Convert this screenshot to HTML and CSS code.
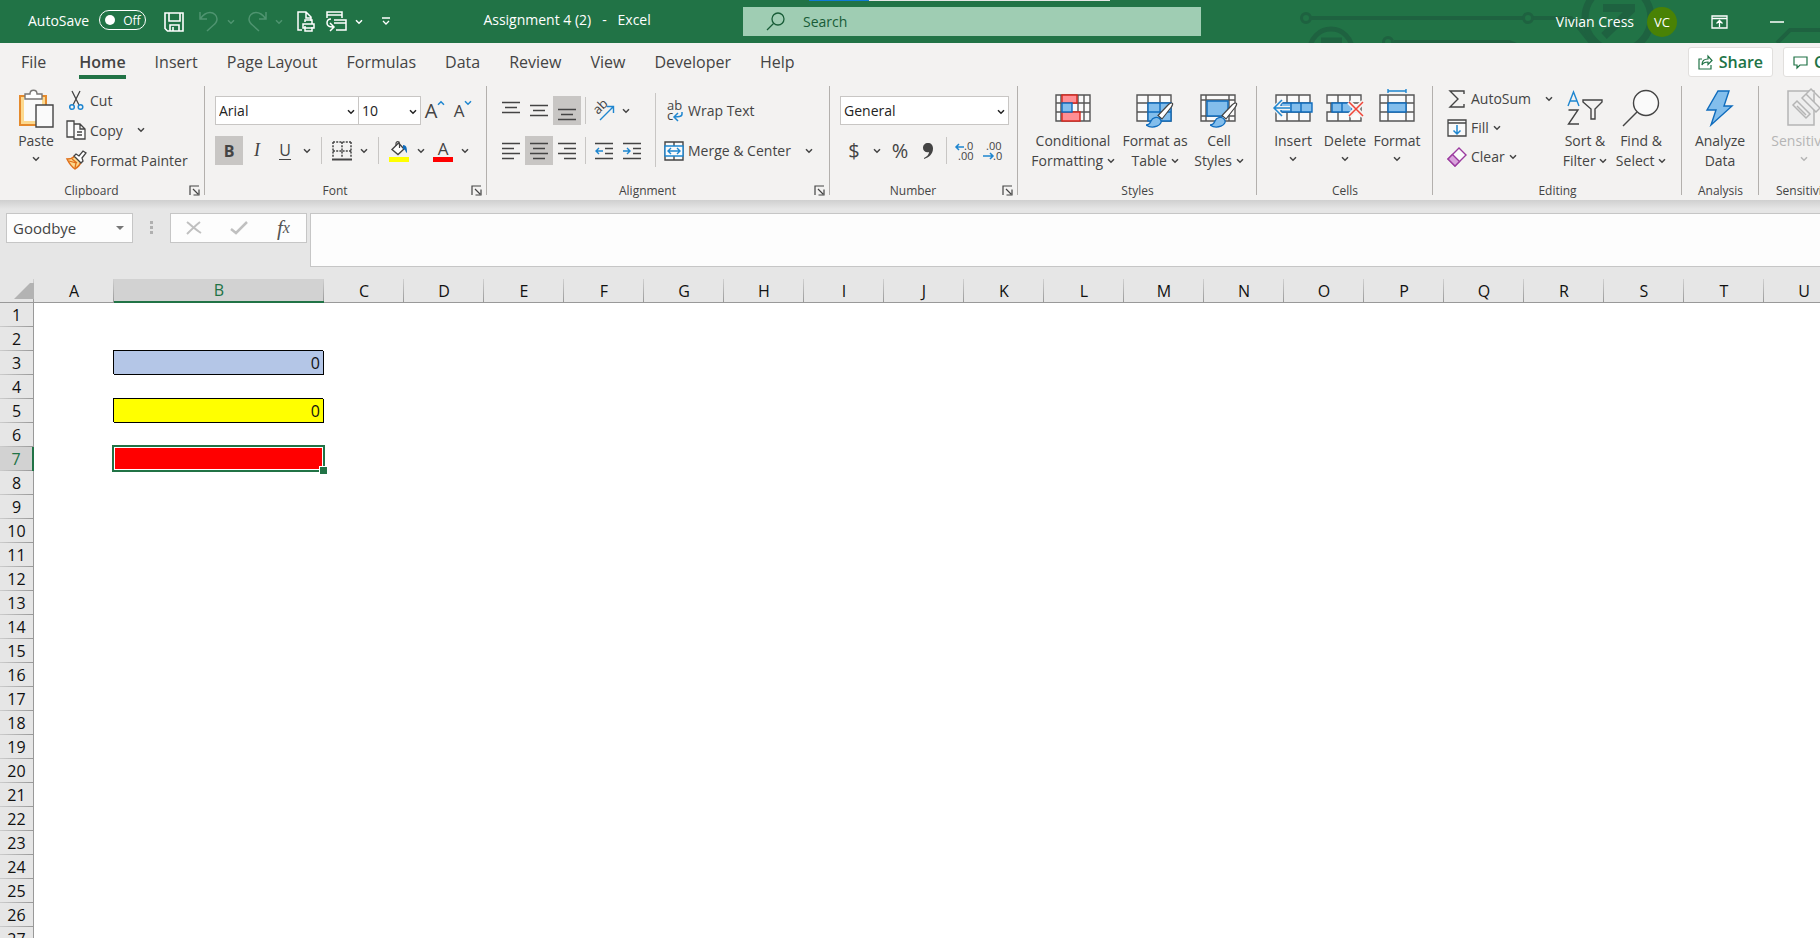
FILE: index.html
```html
<!DOCTYPE html>
<html lang="en">
<head>
    <meta charset="utf-8">
    <title>Assignment 4 (2) - Excel</title>
    <link rel="stylesheet" href="styles.css">
</head>
<body>
    <!-- shared icons -->
    <svg class="defs" width="0" height="0">
        <symbol id="chev" viewBox="0 0 8 6"><path d="M1 1.2 4 4.2 7 1.2" fill="none" stroke="currentColor" stroke-width="1.5"/></symbol>
        <symbol id="launch" viewBox="0 0 11 11"><path d="M1 10V1h9M4 4l5 5M10 4.500V10H4.500" fill="none" stroke="currentColor" stroke-width="1.2"/></symbol>
        <symbol id="brush" viewBox="0 0 28 26">
            <path d="M25.500 1c2 0 1 2.500-.5 4.500L16 17l-4-3.500L22 3c1.300-1.300 2.500-2 3.500-2z" fill="#fff" stroke="#444" stroke-width="1.200"/>
            <path d="M0 23c3 0 4-1.500 5-4 1.500-3.500 6-5 9-2 2.500 2.500.5 6-3 7.200-3.500 1.200-8 1-11-1.200z" fill="#83beec" stroke="#0f6cbd" stroke-width="1.300"/>
        </symbol>
    </svg>

    <header class="titlebar">
        <svg class="art" width="520" height="43" viewBox="0 0 520 43" fill="none" stroke="#1e6240" stroke-width="4">
            <circle cx="6" cy="18" r="4.500" stroke-width="3"/>
            <path d="M11 18h212M233 18h38l20 25M94 42h115l10 4M477 43l13-13h30"/>
            <circle cx="228" cy="18" r="4.500" stroke-width="3"/>
            <circle cx="31" cy="50" r="21" stroke-width="5"/>
            <path d="M21 41h21" stroke-width="7"/>
            <circle cx="88" cy="42" r="4.500" stroke-width="3"/>
            <circle cx="318" cy="18" r="33" stroke-width="7"/>
            <path d="M303 8h32M304 36l28-27" stroke-width="8"/>
        </svg>
        <div class="strip"></div>
        <div class="title-left">
            <div class="quick">
                <label class="autosave"><span>AutoSave</span>
                    <input type="checkbox"><span class="switch">Off</span>
                </label>
                <button class="q-save" aria-label="Save"><svg width="20" height="20" fill="none" stroke="#fff" stroke-width="1.600"><path d="M1 1h18v18H3.500L1 16.500zM5 1v8h11V1M6 19v-6h9v6M9 19v-4"/></svg></button>
                <button class="q-undo" aria-label="Undo"><svg width="20" height="21" fill="none" stroke="#4f9470" stroke-width="1.500"><path d="M1 1v7h7M1.500 7.500C4 4 7 1.500 11 1.500c4 0 7 3 7 6.500 0 3-2 5-4 6.500L8 20"/></svg></button>
                <svg class="chev faded"><use href="#chev"/></svg>
                <button class="q-redo" aria-label="Redo"><svg width="20" height="21" fill="none" stroke="#4f9470" stroke-width="1.500"><path d="M19 1v7h-7M18.500 7.500C16 4 13 1.500 9 1.500c-4 0-7 3-7 6.500 0 3 2 5 4 6.500L12 20"/></svg></button>
                <svg class="chev faded"><use href="#chev"/></svg>
                <button class="q-print" aria-label="Print preview"><svg width="20" height="21" fill="none" stroke="#fff" stroke-width="1.500"><path d="M6 19H2V1h8l5 5v4M10 1v6h5M9 11V9h7v4M7 17v-4h11v4zM9 15v5h7v-4"/></svg></button>
                <button class="q-switch" aria-label="Switch windows"><svg width="21" height="21" fill="none" stroke="#fff" stroke-width="1.500"><path d="M1 7V1h15v6M1 4h15M8 9h12v10H10M8 12h12M5 8c-3 0-4 2-4 4s1 4 6 4M4 12l4 4-4 4"/></svg></button>
                <svg class="chev"><use href="#chev"/></svg>
                <button class="q-more" aria-label="Customize toolbar"><svg width="10" height="9" fill="none" stroke="#fff" stroke-width="1.300"><path d="M1 1h8M2 4l3 3 3-3"/></svg></button>
            </div>
            <h1>Assignment 4 (2)&nbsp;&nbsp; -&nbsp;&nbsp; Excel</h1>
        </div>
        <label class="search">
            <svg width="19" height="19" fill="none" stroke="#185c37" stroke-width="1.300"><circle cx="12" cy="7" r="6"/><path d="M7.500 11.500 1 18"/></svg>
            <input type="text" placeholder="Search" aria-label="Search">
        </label>
        <div class="title-right">
            <span class="user">Vivian Cress</span>
            <span class="avatar">VC</span>
            <button class="display-opt" aria-label="Ribbon display options"><svg width="17" height="14" fill="none" stroke="#fff" stroke-width="1.300"><path d="M1 1h15v12H1zM1 3.500h15M8.500 12V6M5.500 8.500l3-3 3 3"/></svg></button>
            <button class="minimize" aria-label="Minimize"><svg width="14" height="2"><path d="M0 1h14" stroke="#fff" stroke-width="1.500"/></svg></button>
        </div>
    </header>

    <nav class="tabs">
        <a href="#" class="file">File</a>
        <a href="#" class="active">Home</a>
        <a href="#">Insert</a>
        <a href="#">Page Layout</a>
        <a href="#">Formulas</a>
        <a href="#">Data</a>
        <a href="#">Review</a>
        <a href="#">View</a>
        <a href="#">Developer</a>
        <a href="#">Help</a>
        <div class="tab-actions">
            <button><svg width="15" height="15" fill="none" stroke="#217346" stroke-width="1.200"><path d="M4 4H1v10h12v-4M4 10c0-4 2-6 6-6V1l4 4.500-4 4V7C7 7 5 8 4 10z"/></svg>Share</button>
            <button><svg width="15" height="15" fill="none" stroke="#217346" stroke-width="1.200"><path d="M1 2h13v8H7l-3 3v-3H1z"/></svg>Comments</button>
        </div>
    </nav>

    <section class="ribbon">
        <div class="group clipboard">
            <div class="body">
                <button class="big paste">
                    <svg width="36" height="40" viewBox="0 0 36 40"><path d="M2 8h26v29H2z" fill="#fcd98f" stroke="#e58a2c" stroke-width="2"/><path d="M6 10h18v23H6z" fill="#fafafa"/><path d="M7 11V6h5c0-5 7-5 7 0h5v5z" fill="#fff" stroke="#797775" stroke-width="1.400"/><path d="M18 17h17v22H18z" fill="#fafafa" stroke="#444" stroke-width="1.400"/></svg>
                    <span>Paste</span><svg class="chev"><use href="#chev"/></svg>
                </button>
                <div class="stack">
                    <button class="cmd"><svg width="20" height="20" fill="none" stroke="#444" stroke-width="1.300"><path d="M6 1l7 14M14 1L7 15"/><g stroke="#1e86d0" stroke-width="1.500"><circle cx="6" cy="17" r="2.300"/><circle cx="14.500" cy="17" r="2.300"/></g></svg>Cut</button>
                    <button class="cmd"><svg width="20" height="20" fill="#fafafa" stroke="#444" stroke-width="1.300"><path d="M1 1h7v16H1zM8 4h6l5 5v10H8zM14 4v5h5M11 12h5M11 15h5"/></svg>Copy<svg class="chev gap"><use href="#chev"/></svg></button>
                    <button class="cmd"><svg width="20" height="20" fill="none" stroke-width="1.300"><path d="M1 9c3 0 6-1 8-3l6 6c-1 3-3 5-6 7-3-2-6-6-8-10z" fill="#fcd98f" stroke="#e0701a" stroke-width="1.500"/><path d="M3 11l7 2-1 5M6 9l5 4" stroke="#e0701a"/><path d="M8 6l2-2 3 2 4-5 3 2-4 5 1 3-2 2z" fill="#fff" stroke="#444"/></svg>Format Painter</button>
                </div>
            </div>
            <footer><span>Clipboard</span><button aria-label="Clipboard settings"><svg class="launch"><use href="#launch"/></svg></button></footer>
        </div>

        <div class="group font">
            <div class="body rows">
                <div class="row">
                    <span class="combo family"><select aria-label="Font"><option>Arial</option></select><svg class="chev"><use href="#chev"/></svg></span>
                    <span class="combo size"><select aria-label="Font size"><option>10</option></select><svg class="chev"><use href="#chev"/></svg></span>
                    <button class="tool" aria-label="Increase font size"><span class="grow">A</span><svg class="chev blue up"><use href="#chev"/></svg></button>
                    <button class="tool" aria-label="Decrease font size"><span class="shrink">A</span><svg class="chev blue"><use href="#chev"/></svg></button>
                </div>
                <div class="row">
                    <button class="tool on bold">B</button>
                    <button class="tool italic">I</button>
                    <button class="tool"><span class="under">U</span></button>
                    <button class="drop" aria-label="Underline options"><svg class="chev"><use href="#chev"/></svg></button>
                    <i class="sep"></i>
                    <button class="tool" aria-label="Borders"><svg width="20" height="20" fill="none" stroke="#444" stroke-width="1.500"><path d="M1 1h18M1 10h18M1 1v16M10 1v16M19 1v16" stroke-dasharray="2 1.200"/><path d="M0 18.500h20" stroke-width="2"/></svg></button>
                    <button class="drop" aria-label="Border options"><svg class="chev"><use href="#chev"/></svg></button>
                    <i class="sep"></i>
                    <button class="tool" aria-label="Fill color"><svg width="20" height="22" fill="none"><path d="M3 9.500 9.500 3l5.500 6-6 5.500z" fill="#fff" stroke="#444" stroke-width="1.400"/><path d="M7 6V3.500C7 1 10.500 1 10.500 3.500V8" stroke="#444" stroke-width="1.200"/><path d="M14 5c4 0 4 4 4 8-2-1-1-4-4-4z" fill="#0f6cbd"/><path d="M0 17h20v5H0z" fill="#ff0"/></svg></button>
                    <button class="drop" aria-label="Fill color options"><svg class="chev"><use href="#chev"/></svg></button>
                    <button class="tool" aria-label="Font color"><span class="fontcolor">A</span></button>
                    <button class="drop" aria-label="Font color options"><svg class="chev"><use href="#chev"/></svg></button>
                </div>
            </div>
            <footer><span>Font</span><button aria-label="Font settings"><svg class="launch"><use href="#launch"/></svg></button></footer>
        </div>

        <div class="group align">
            <div class="body">
                <div class="rows">
                    <div class="row">
                        <button class="tool" aria-label="Top align"><svg class="lines"><path d="M0 1.500h18M3 6.500h12M0 11.500h18"/></svg></button>
                        <button class="tool" aria-label="Middle align"><svg class="lines"><path d="M0 4.500h18M3 9.500h12M0 14.500h18"/></svg></button>
                        <button class="tool on" aria-label="Bottom align"><svg class="lines"><path d="M0 8.500h18M3 13.500h12M0 18.500h18"/></svg></button>
                        <i class="sep"></i>
                        <button class="tool" aria-label="Orientation"><svg width="22" height="20"><text x="0" y="0" transform="translate(5 14) rotate(-45)" font-size="13" fill="#444">ab</text><path d="M7 19 20 6M14 5.500h6.500V12" fill="none" stroke="#1e86d0" stroke-width="1.400"/></svg></button>
                        <button class="drop" aria-label="Orientation options"><svg class="chev"><use href="#chev"/></svg></button>
                    </div>
                    <div class="row">
                        <button class="tool" aria-label="Align left"><svg class="lines"><path d="M0 2.500h18M0 7.500h12M0 12.500h18M0 17.500h12"/></svg></button>
                        <button class="tool on" aria-label="Center"><svg class="lines"><path d="M0 2.500h18M3 7.500h12M0 12.500h18M3 17.500h12"/></svg></button>
                        <button class="tool" aria-label="Align right"><svg class="lines"><path d="M0 2.500h18M6 7.500h12M0 12.500h18M6 17.500h12"/></svg></button>
                        <i class="sep"></i>
                        <button class="tool" aria-label="Decrease indent"><svg class="lines"><path d="M0 2.500h18M10 7.500h8M10 12.500h8M0 17.500h18"/><path d="M1 10h7M4 7l-3 3 3 3" stroke="#1e86d0"/></svg></button>
                        <button class="tool" aria-label="Increase indent"><svg class="lines"><path d="M0 2.500h18M10 7.500h8M10 12.500h8M0 17.500h18"/><path d="M0 10h7M4 7l3 3-3 3" stroke="#1e86d0"/></svg></button>
                    </div>
                </div>
                <i class="sep tall"></i>
                <div class="rows">
                    <button class="cmd"><svg width="20" height="22" fill="#444" font-size="13"><text x="3" y="10">ab</text><text x="3" y="20">c</text><path d="M18 12v2c0 3-4 3-8 3M14 13l-4 4 4 4" fill="none" stroke="#1e86d0" stroke-width="1.500"/></svg>Wrap Text</button>
                    <button class="cmd"><svg width="20" height="20" fill="#fafafa" stroke="#444" stroke-width="1.400"><path d="M1 1h18v18H1zM10 1v4M10 15v4"/><path d="M1 5h18v10H1zM4 10h12M7 7l-3 3 3 3M13 7l3 3-3 3" stroke="#1e86d0"/></svg>Merge &amp; Center<svg class="chev gap"><use href="#chev"/></svg></button>
                </div>
            </div>
            <footer><span>Alignment</span><button aria-label="Alignment settings"><svg class="launch"><use href="#launch"/></svg></button></footer>
        </div>

        <div class="group number">
            <div class="body rows">
                <div class="row">
                    <span class="combo general"><select aria-label="Number format"><option>General</option></select><svg class="chev"><use href="#chev"/></svg></span>
                </div>
                <div class="row">
                    <button class="tool sign">$</button>
                    <button class="drop" aria-label="Currency options"><svg class="chev"><use href="#chev"/></svg></button>
                    <button class="tool sign">%</button>
                    <button class="tool" aria-label="Comma style"><svg width="10" height="16"><path d="M5 0c3 0 5 2 5 5.500C10 11 6 14.500 1 16v-1c3-1.500 5-3.500 5-6C3 10 0 8 0 5c0-3 2-5 5-5z" fill="#444"/></svg></button>
                    <i class="sep"></i>
                    <button class="tool" aria-label="Increase decimal"><svg width="20" height="20" fill="#444" font-size="11"><text x="9" y="9">.0</text><text x="3" y="19">.00</text><path d="M1 6h8M4 3L1 6l3 3" fill="none" stroke="#1e86d0" stroke-width="1.500"/></svg></button>
                    <button class="tool" aria-label="Decrease decimal"><svg width="20" height="20" fill="#444" font-size="11"><text x="3" y="9">.00</text><text x="10" y="19">.0</text><path d="M0 15h10M7 12l3 3-3 3" fill="none" stroke="#1e86d0" stroke-width="1.500"/></svg></button>
                </div>
            </div>
            <footer><span>Number</span><button aria-label="Number settings"><svg class="launch"><use href="#launch"/></svg></button></footer>
        </div>

        <div class="group styles">
            <div class="body">
                <button class="big wide"><svg width="36" height="40" fill="none" stroke-width="1.400"><path d="M1 7h34v26H1zM6 7v26M23 7v26M29 7v26M1 15h34M1 24h34" fill="#fafafa" stroke="#555"/><path d="M7 7h15v8H7zM7 24h18v9H7z" fill="#ff8f94" stroke="#d6281f"/><path d="M7 15h10v9H7z" fill="#83beec" stroke="#0f6cbd"/></svg><span>Conditional</span><span>Formatting <svg class="chev"><use href="#chev"/></svg></span></button>
                <button class="big table"><svg width="38" height="40" fill="none" stroke-width="1.400"><path d="M1 7h34v26H1zM12 7v26M24 7v26M1 15h34M1 24h34" fill="#fafafa" stroke="#555"/><path d="M12 15h23v18H12zM24 15v18M12 24h23" fill="#83beec" stroke="#0f6cbd"/><use href="#brush" x="10" y="14" width="28" height="26"/></svg><span>Format as</span><span>Table <svg class="chev"><use href="#chev"/></svg></span></button>
                <button class="big"><svg width="38" height="40" fill="none" stroke-width="1.400"><path d="M1 7h34v26H1zM6 7v26M29 7v26M1 12h34M1 28h34" fill="#fafafa" stroke="#555"/><path d="M7 13h21v15H7z" fill="#83beec" stroke="#0f6cbd"/><use href="#brush" x="10" y="14" width="28" height="26"/></svg><span>Cell</span><span>Styles <svg class="chev"><use href="#chev"/></svg></span></button>
            </div>
            <footer><span>Styles</span></footer>
        </div>

        <div class="group cells">
            <div class="body">
                <button class="big"><svg width="40" height="40" fill="none" stroke-width="1.400"><path d="M3 7h34v26H3zM14 7v26M26 7v26M3 15h34M3 24h34" fill="#fafafa" stroke="#555"/><path d="M8 15h31v9H8zM18 15v9M28 15v9" fill="#83beec" stroke="#0f6cbd"/><path d="M1 20h16M9 12l-8 8 8 8" stroke="#f3f2f1" stroke-width="4"/><path d="M1 20h16M9 12l-8 8 8 8" stroke="#1e86d0" stroke-width="1.500"/></svg><span>Insert</span><svg class="chev"><use href="#chev"/></svg></button>
                <button class="big"><svg width="40" height="40" fill="none" stroke-width="1.400"><path d="M2 7h34v26H2v-9h4v-9H2zM13 7v26M25 7v26M2 15h34M2 24h34" fill="#fafafa" stroke="#555"/><path d="M7 15h20v9H7zM17 15v9" fill="#83beec" stroke="#0f6cbd"/><path d="M24 14l14 14M38 14L24 28" stroke="#f3f2f1" stroke-width="5"/><path d="M24 14l14 14M38 14L24 28" stroke="#f04438" stroke-width="1.500"/></svg><span>Delete</span><svg class="chev"><use href="#chev"/></svg></button>
                <button class="big"><svg width="36" height="40" fill="none" stroke-width="1.400"><path d="M1 7h34v26H1zM9 7v26M27 7v26M1 15h34M1 24h34" fill="#fafafa" stroke="#555"/><path d="M9 15h18v9H9z" fill="#83beec" stroke="#0f6cbd"/><path d="M9 3h18M9 1v4M27 1v4" stroke="#1e86d0"/></svg><span>Format</span><svg class="chev"><use href="#chev"/></svg></button>
            </div>
            <footer><span>Cells</span></footer>
        </div>

        <div class="group editing">
            <div class="body">
                <div class="stack">
                    <button class="cmd"><svg width="20" height="20" fill="none" stroke="#444" stroke-width="1.400"><path d="M17 5V2H3l8 8-8 8h14v-3"/></svg>AutoSum<svg class="chev gap"><use href="#chev"/></svg></button>
                    <button class="cmd"><svg width="20" height="20" fill="none" stroke="#444" stroke-width="1.300"><path d="M1 2h18v16H1zM1 5h18" fill="#fafafa"/><path d="M10 7v9M6.500 12.500 10 16l3.500-3.500" stroke="#1e86d0" stroke-width="1.500"/></svg>Fill <svg class="chev"><use href="#chev"/></svg></button>
                    <button class="cmd"><svg width="20" height="20" stroke="#9b3a9f" stroke-width="1.400" fill="#fafafa"><path d="M12 1l7 7L8 19l-7-7z"/><path d="M5.500 7.500 12.500 14.500 8 19l-7-7z" fill="#d9a3dc"/></svg>Clear <svg class="chev"><use href="#chev"/></svg></button>
                </div>
                <button class="big"><svg width="36" height="40" fill="none" stroke="#444" stroke-width="1.400"><path d="M1 18 6.500 4 12 18M3 13h7" stroke="#1e86d0"/><path d="M1.500 22H11L1.500 36H12M16 12h19v2l-7 7v10h-4V21l-8-7z" fill="none"/></svg><span>Sort &amp;</span><span>Filter <svg class="chev"><use href="#chev"/></svg></span></button>
                <button class="big"><svg width="38" height="40" fill="none" stroke="#444" stroke-width="1.400"><circle cx="24" cy="15" r="12.500" fill="#fafafa"/><path d="M15 24 1 38"/></svg><span>Find &amp;</span><span>Select <svg class="chev"><use href="#chev"/></svg></span></button>
            </div>
            <footer><span>Editing</span></footer>
        </div>

        <div class="group analysis">
            <div class="body">
                <button class="big"><svg width="28" height="40" fill="#83beec" stroke="#0f6cbd" stroke-width="1.400"><path d="M12 3h11l-5 15h8L5 37l5-15H1z"/></svg><span>Analyze</span><span>Data</span></button>
            </div>
            <footer><span>Analysis</span></footer>
        </div>

        <div class="group sensitivity">
            <div class="body">
                <button class="big" disabled><svg width="36" height="40" fill="#eee" stroke="#b5b5b5" stroke-width="1.500"><path d="M2 3h26v34H2z"/><path d="M7 17l4-4 13 13-4 4zM11 18l9 9M16 10l4-4 14 14-4 4zM20 6l5-5 4 4M25 1l9 9"/></svg><span>Sensitivity</span><svg class="chev"><use href="#chev"/></svg></button>
            </div>
            <footer><span>Sensitivity</span></footer>
        </div>
    </section>

    <section class="formula">
        <span class="namebox"><input type="text" value="Goodbye" aria-label="Name box"><i class="caret"></i></span>
        <span class="dots"><i></i><i></i><i></i></span>
        <div class="fx-tools">
            <button aria-label="Cancel"><svg width="16" height="14"><path d="M1 1c5 4 9 8 14 11M14 1C9 5 5 9 1 13" fill="none" stroke="#c0c0c0" stroke-width="2"/></svg></button>
            <button aria-label="Enter"><svg width="18" height="14"><path d="M1 8l5 4L17 1" fill="none" stroke="#c0c0c0" stroke-width="2.500"/></svg></button>
            <button class="fx" aria-label="Insert function">f<span>x</span></button>
        </div>
        <textarea aria-label="Formula"></textarea>
    </section>

    <main class="sheet">
        <table>
            <colgroup><col class="c-num"><col class="c-std"><col class="c-wide"><col class="c-std" span="19"></colgroup>
            <thead>
                <tr><th class="corner"></th><th>A</th><th class="sel">B</th><th>C</th><th>D</th><th>E</th><th>F</th><th>G</th><th>H</th><th>I</th><th>J</th><th>K</th><th>L</th><th>M</th><th>N</th><th>O</th><th>P</th><th>Q</th><th>R</th><th>S</th><th>T</th><th>U</th></tr>
            </thead>
            <tbody>
                <tr><th>1</th></tr>
                <tr><th>2</th></tr>
                <tr><th>3</th><td></td><td class="fill steel">0</td></tr>
                <tr><th>4</th></tr>
                <tr><th>5</th><td></td><td class="fill yellow">0</td></tr>
                <tr><th>6</th></tr>
                <tr><th class="sel">7</th><td></td><td class="active-cell"></td></tr>
                <tr><th>8</th></tr>
                <tr><th>9</th></tr>
                <tr><th>10</th></tr>
                <tr><th>11</th></tr>
                <tr><th>12</th></tr>
                <tr><th>13</th></tr>
                <tr><th>14</th></tr>
                <tr><th>15</th></tr>
                <tr><th>16</th></tr>
                <tr><th>17</th></tr>
                <tr><th>18</th></tr>
                <tr><th>19</th></tr>
                <tr><th>20</th></tr>
                <tr><th>21</th></tr>
                <tr><th>22</th></tr>
                <tr><th>23</th></tr>
                <tr><th>24</th></tr>
                <tr><th>25</th></tr>
                <tr><th>26</th></tr>
                <tr><th>27</th></tr>
            </tbody>
        </table>
    </main>
</body>
</html>
```
FILE: styles.css
```css
* {
    box-sizing: border-box;
}
body {
    margin: 0;
    height: 100vh;
    overflow: hidden;
    display: flex;
    flex-direction: column;
    font-family: "Open Sans", "Noto Sans", sans-serif;
    font-size: 14px;
    color: #444;
    background-color: #fff;
}
button, input, select, textarea {
    font: inherit;
    color: inherit;
    margin: 0;
    padding: 0;
    border: 0;
    border-radius: 0;
    background: none;
    outline: none;
}
button {
    display: flex;
    align-items: center;
    justify-content: center;
    flex-shrink: 0;
    white-space: nowrap;
}
button svg {
    flex-shrink: 0;
    overflow: visible;
}
.defs {
    position: absolute;
}
.chev {
    flex-shrink: 0;
    width: 8px;
    height: 6px;
}
.launch {
    width: 11px;
    height: 11px;
}

/* title bar */
.titlebar {
    position: relative;
    flex-shrink: 0;
    height: 43px;
    display: grid;
    grid-template-columns: 743fr 458fr 619fr;
    align-items: center;
    background-color: #217346;
    color: #fff;
}
.art {
    position: absolute;
    top: 0;
    right: 0;
}
.strip {
    position: absolute;
    top: 0;
    left: 809px;
    width: 301px;
    height: 1px;
    background: linear-gradient(to right, #0f7bd4 60px, #e6e6e6 60px);
}
.title-left, .quick, .title-right, .autosave {
    display: flex;
    align-items: center;
}
.quick {
    padding-left: 28px;
}
.autosave {
    gap: 10px;
    margin-bottom: 3px;
}
.autosave input {
    position: absolute;
    opacity: 0;
}
.switch {
    display: flex;
    align-items: center;
    gap: 8px;
    width: 47px;
    height: 20px;
    padding-left: 5px;
    border: 1px solid #fff;
    border-radius: 10px;
    font-size: 12px;
}
.switch::before {
    content: "";
    width: 10px;
    height: 10px;
    border-radius: 50%;
    background-color: #fff;
}
.q-save {
    margin-left: 18px;
}
.q-undo {
    margin: 0 8px 0 15px;
}
.q-redo {
    margin: 0 8px 0 12px;
}
.q-print {
    margin-left: 13px;
}
.q-switch {
    margin: 0 8px 0 10px;
}
.q-more {
    margin-left: 18px;
}
.faded {
    color: #4f9470;
}
h1 {
    flex: 1;
    margin: 0 0 4px;
    font-size: 14px;
    font-weight: normal;
    text-align: center;
    white-space: nowrap;
}
.search {
    display: flex;
    align-items: center;
    gap: 18px;
    height: 29px;
    padding-left: 23px;
    background-color: #9fcdb3;
    color: #185c37;
    z-index: 1;
}
.search input {
    flex: 1;
}
.search input::placeholder {
    color: #185c37;
    opacity: 1;
}
.title-right {
    justify-content: flex-end;
    padding-right: 36px;
    z-index: 1;
}
.avatar {
    width: 30px;
    height: 30px;
    margin: 0 34px 0 13px;
    border-radius: 50%;
    background-color: #498205;
    font-size: 13px;
    line-height: 30px;
    text-align: center;
}
.minimize {
    margin-left: 42px;
}

/* tabs */
.tabs {
    flex-shrink: 0;
    display: flex;
    align-items: flex-start;
    gap: 29px;
    height: 43px;
    padding-left: 21px;
    background-color: #f3f2f1;
    font-size: 16px;
}
.tabs a {
    height: 36px;
    line-height: 38px;
    color: #444;
    text-decoration: none;
    white-space: nowrap;
}
.tabs .file {
    margin-right: 4px;
}
.tabs .active {
    border-bottom: 4px solid #217346;
    font-weight: 600;
}
.tab-actions {
    display: flex;
    gap: 10px;
    margin: 4px -88px 0 auto;
}
.tab-actions button {
    height: 30px;
    gap: 6px;
    padding: 0 9px;
    border: 1px solid #e1dfdd;
    border-radius: 3px;
    background-color: #fff;
    color: #217346;
    font-weight: 600;
}

/* ribbon */
.ribbon {
    flex-shrink: 0;
    display: flex;
    height: 114px;
    overflow: hidden;
    background-color: #f3f2f1;
}
.group {
    position: relative;
    flex-shrink: 0;
    display: flex;
    flex-direction: column;
}
.group::after {
    content: "";
    position: absolute;
    top: 0;
    right: 0;
    bottom: 5px;
    width: 1px;
    background-color: #b3b0ad;
}
.body {
    flex: 1;
    display: flex;
    align-items: flex-start;
}
.group footer {
    display: flex;
    align-items: center;
    height: 19px;
    font-size: 12px;
}
.group footer span {
    flex: 1;
    text-align: center;
}
.group footer button {
    width: 22px;
}
.clipboard { width: 205px; }
.font { width: 282px; }
.align { width: 343px; }
.number { width: 188px; }
.styles { width: 239px; }
.cells { width: 176px; }
.editing { width: 249px; }
.analysis { width: 77px; }
.sensitivity { width: 90px; }

.big {
    width: 56px;
    flex-direction: column;
    justify-content: flex-start;
    padding-top: 2px;
    line-height: 20px;
}
.big > svg:first-child {
    margin-bottom: 3px;
}
.big > .chev {
    margin-top: 5px;
}
.big .chev {
    vertical-align: 2px;
}
.big:disabled {
    color: #b5b5b5;
}
.stack {
    margin-top: -1px;
}
.cmd {
    justify-content: flex-start;
    height: 30px;
    gap: 4px;
}
.cmd .gap {
    margin-left: 10px;
}
.paste {
    margin: 0 2px 0 8px;
}
.rows {
    display: flex;
    flex-direction: column;
    gap: 11px;
    padding-top: 10px;
}
.row, .rows .cmd {
    display: flex;
    align-items: center;
    height: 29px;
}
.tool {
    width: 28px;
    height: 29px;
}
.on {
    background-color: #c8c6c4;
}
.drop {
    width: 16px;
    height: 29px;
}
.sep {
    width: 1px;
    height: 27px;
    background-color: #c8c6c4;
}
.combo {
    position: relative;
    height: 29px;
    background-color: #fff;
    border: 1px solid #c8c6c4;
    color: #222;
}
.combo select {
    appearance: none;
    width: 100%;
    height: 100%;
    padding-left: 3px;
}
.combo .chev {
    position: absolute;
    top: 12px;
    right: 3px;
}
.family { width: 144px; }
.size { width: 63px; margin-left: -1px; }
.general { width: 169px; }

.font .body {
    padding-left: 10px;
}
.font .sep {
    margin: 0 6px;
}
.grow {
    font-size: 20px;
}
.shrink {
    font-size: 17px;
}
.blue {
    color: #1e86d0;
    align-self: flex-start;
    margin-top: 4px;
}
.up {
    transform: rotate(180deg);
}
.bold {
    font-weight: bold;
    font-size: 16px;
}
.italic {
    font: italic 18px "Liberation Serif", serif;
}
.under {
    font-size: 16px;
    line-height: 18px;
    border-bottom: 1px solid #444;
}
.fontcolor {
    width: 20px;
    border-bottom: 5px solid #f00;
    font-size: 17px;
    line-height: 17px;
}
.lines {
    width: 18px;
    height: 20px;
    fill: none;
    stroke: #444;
    stroke-width: 1.4;
}
.align .body {
    padding-left: 10px;
}
.align .body > .rows:first-child {
    padding-right: 9px;
}
.align .sep {
    margin: 0 4px;
}
.align .body > .tall {
    height: 74px;
    margin: 7px 8px 0 0;
}
.number .body {
    padding-left: 10px;
}
.sign {
    font-size: 20px;
}
.number .drop {
    margin: 0 1px;
}
.number .sep {
    margin: 0 4px;
}
.styles .body {
    padding-left: 9px;
}
.wide {
    width: 92px;
}
.table {
    width: 72px;
}
.cells .body {
    padding-left: 10px;
}
.cells .big {
    width: 52px;
}
.editing .body {
    padding-left: 14px;
}
.editing .stack {
    width: 110px;
    margin-top: -2px;
}
.editing .cmd {
    height: 29px;
}
.analysis .big, .sensitivity .big {
    width: 76px;
}
.sensitivity .big {
    margin-left: 7px;
}

/* formula bar */
.formula {
    flex-shrink: 0;
    display: flex;
    align-items: flex-start;
    height: 79px;
    padding: 13px 0 0 6px;
    background: linear-gradient(#cfcfcf, #e6e6e6 9px);
}
.namebox, .fx-tools {
    display: flex;
    align-items: center;
    height: 30px;
    border: 1px solid #c6c6c6;
    background-color: #fdfdfd;
}
.namebox {
    width: 127px;
    padding: 0 8px 0 6px;
    font-size: 15px;
}
.namebox input {
    flex: 1;
    min-width: 0;
}
.caret {
    border: 4px solid transparent;
    border-top-color: #777;
    border-bottom: 0;
}
.dots {
    display: flex;
    flex-direction: column;
    gap: 2px;
    margin: 8px 17px 0;
}
.dots i {
    width: 3px;
    height: 3px;
    background-color: #b0b0b0;
}
.fx-tools {
    width: 137px;
}
.fx-tools button {
    flex: 1;
}
.fx-tools .fx {
    font: italic 21px "Liberation Serif", serif;
    color: #555;
}
.fx span {
    font-size: 16px;
}
.formula textarea {
    flex: 1;
    height: 54px;
    margin-left: 3px;
    border: 1px solid #c6c6c6;
    border-right: 0;
    background-color: #fdfdfd;
    resize: none;
}

/* sheet */
.sheet {
    flex: 1;
    overflow: hidden;
}
table {
    width: 1844px;
    table-layout: fixed;
    border-collapse: separate;
    border-spacing: 0;
    font-size: 16px;
    line-height: 22px;
    color: #111;
}
.c-num { width: 34px; }
.c-std { width: 80px; }
.c-wide { width: 210px; }
th, td {
    height: 24px;
    padding: 0;
    font-weight: normal;
}
thead th {
    background: linear-gradient(#d0d0d0, #999) right / 1px 100% no-repeat #e6e6e6;
    border-bottom: 1px solid #999;
}
tbody th {
    border-right: 1px solid #999;
    background: linear-gradient(to right, #ccc, #999) bottom / 100% 1px no-repeat #e6e6e6;
}
thead .sel {
    background-color: #d2d2d2;
    border-bottom: 2px solid #217346;
    color: #217346;
}
tbody .sel {
    background-color: #d2d2d2;
    border-right: 2px solid #217346;
    color: #217346;
}
.corner::after {
    content: "";
    display: block;
    width: 16px;
    margin-left: 14px;
    border-bottom: 16px solid #b3b3b3;
    border-left: 16px solid transparent;
}
td {
    position: relative;
    padding-right: 4px;
    text-align: right;
}
/* borders sit on the grid line shared with the previous row and column */
.fill {
    box-shadow: inset -1px -1px 0 #000, -1px -1px 0 #000;
}
.steel { background-color: #b4c6e7; }
.yellow { background-color: #ff0; }
.active-cell {
    background-color: #f00;
}
.active-cell::before {
    content: "";
    position: absolute;
    inset: -2px -1px -1px -2px;
    border: 2px solid #217346;
    box-shadow: inset 0 0 0 1px #fff;
}
.active-cell::after {
    content: "";
    position: absolute;
    right: -3px;
    bottom: -3px;
    width: 7px;
    height: 7px;
    background-color: #217346;
    border: solid #fff;
    border-width: 1px 0 0 1px;
}
```
